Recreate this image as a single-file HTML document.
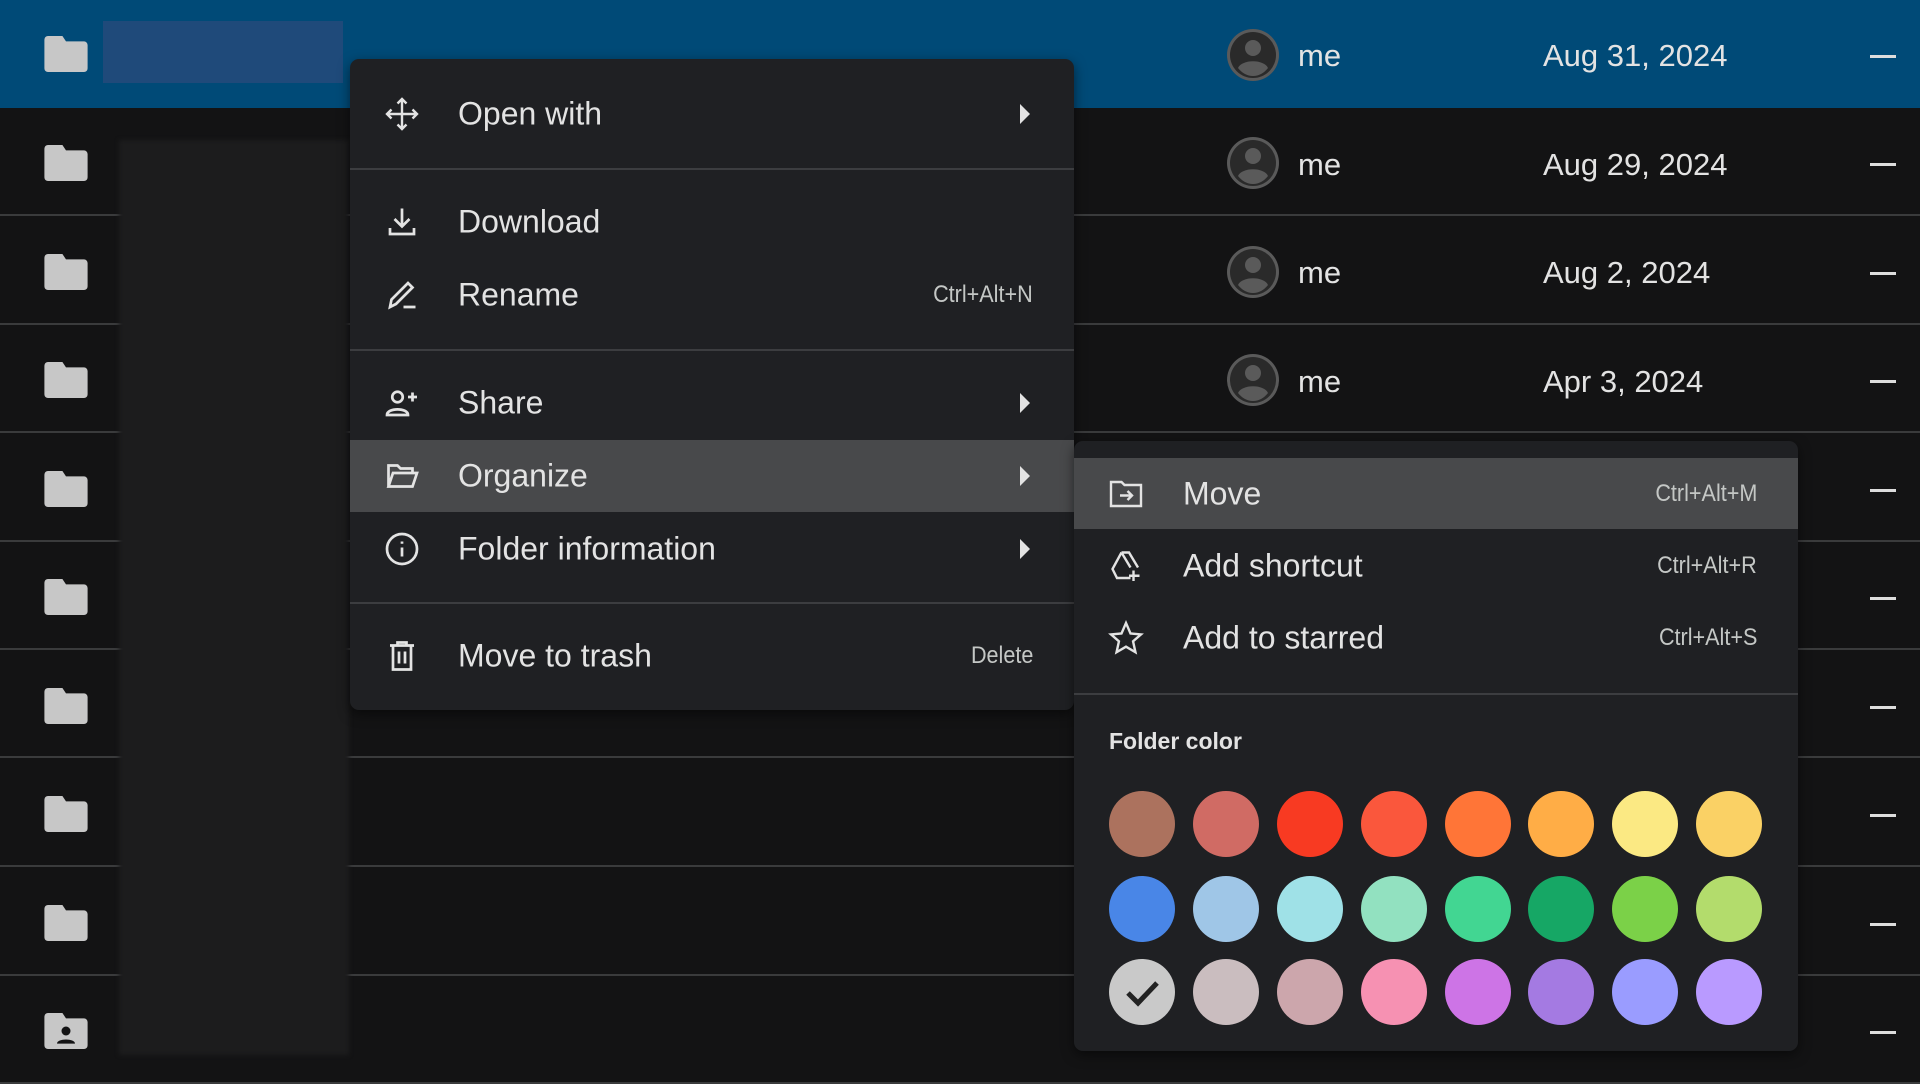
<!DOCTYPE html>
<html><head><meta charset="utf-8"><style>
*{margin:0;padding:0;box-sizing:border-box}
body{width:1920px;height:1068px;background:#131314;position:relative;overflow:hidden;font-family:"Liberation Sans",sans-serif;color:#e3e3e3}
.row{position:absolute;left:0;width:1920px;height:108px;border-bottom:2px solid #3a3b3c}
.sel{background:#004a77;border-bottom:none}
.fold{position:absolute;left:43px;width:46px;height:36px}
.blur{position:absolute;left:119px;width:230px;height:108px;background:#1c1c1d;filter:blur(2px)}
.av{position:absolute;left:1226px;width:54px;height:54px}
.me{position:absolute;left:1298px;font-size:31px}
.dt{position:absolute;left:1543px;font-size:31px}
.dash{position:absolute;left:1870px;width:26px;height:3px;background:#ddd}
.menu{position:absolute;background:#1f2023;border-radius:9px;box-shadow:0 4px 12px rgba(0,0,0,.5)}
.it{position:absolute;left:0;right:0;height:72px}
.it .t{position:absolute;top:50%;transform:translateY(-50%);font-size:32px;color:#e3e3e3}
.it .sc{position:absolute;top:50%;transform:translateY(-50%) scaleX(.9);transform-origin:right center;font-size:24px;color:#c4c7c5}
.it .ar{position:absolute;top:50%;margin-top:-10px;width:0;height:0;border-left:10px solid #e3e3e3;border-top:10px solid transparent;border-bottom:10px solid transparent}
.it svg{position:absolute;top:50%;margin-top:-18px}
.hl{background:#48494b}
.dv{position:absolute;left:0;right:0;height:2px;background:#3c3d40}
.c{position:absolute;width:66px;height:66px;border-radius:50%}
</style></head><body>
<svg width="0" height="0" style="position:absolute"><defs><symbol id="f" viewBox="0 0 24 20"><path d="M2 0h8l2 3h10a2 2 0 0 1 2 2v13a2 2 0 0 1-2 2H2a2 2 0 0 1-2-2V2a2 2 0 0 1 2-2z" fill="#c7c7c7"/></symbol>
<symbol id="a" viewBox="0 0 54 54"><circle cx="27" cy="27" r="26" fill="#5a5a5a"/><circle cx="27" cy="27" r="23" fill="#2a2a2a"/><circle cx="27" cy="20" r="8" fill="#5a5a5a"/><path d="M12 40c4-9 26-9 30 0c-4 5-9 8-15 8s-11-3-15-8z" fill="#5a5a5a"/></symbol></defs></svg>
<div class="row sel" style="top:0"></div>
<div style="position:absolute;left:103px;top:21px;width:240px;height:62px;background:#1f4a7a"></div>
<div class="row" style="top:108px"></div><div class="row" style="top:217px"></div><div class="row" style="top:325px"></div><div class="row" style="top:434px"></div><div class="row" style="top:542px"></div><div class="row" style="top:650px"></div><div class="row" style="top:759px"></div><div class="row" style="top:868px"></div><div class="row" style="top:976px"></div>
<div class="blur" style="top:140px;height:915px"></div>
<svg class="fold" style="top:36px" ><use href="#f"/></svg>
<svg class="fold" style="top:145px"><use href="#f"/></svg>
<svg class="fold" style="top:254px"><use href="#f"/></svg>
<svg class="fold" style="top:362px"><use href="#f"/></svg>
<svg class="fold" style="top:471px"><use href="#f"/></svg>
<svg class="fold" style="top:579px"><use href="#f"/></svg>
<svg class="fold" style="top:688px"><use href="#f"/></svg>
<svg class="fold" style="top:796px"><use href="#f"/></svg>
<svg class="fold" style="top:905px"><use href="#f"/></svg>
<svg class="fold" style="top:1013px" viewBox="0 0 24 20"><path d="M2 0h8l2 3h10a2 2 0 0 1 2 2v13a2 2 0 0 1-2 2H2a2 2 0 0 1-2-2V2a2 2 0 0 1 2-2z" fill="#c7c7c7"/><circle cx="12" cy="10" r="2.5" fill="#131314"/><path d="M7 17c0-3 10-3 10 0z" fill="#131314"/></svg>
<svg class="av" style="top:28px"><use href="#a"/></svg><div class="me" style="top:38px">me</div><div class="dt" style="top:38px">Aug 31, 2024</div>
<svg class="av" style="top:136px"><use href="#a"/></svg><div class="me" style="top:147px">me</div><div class="dt" style="top:147px">Aug 29, 2024</div>
<svg class="av" style="top:245px"><use href="#a"/></svg><div class="me" style="top:255px">me</div><div class="dt" style="top:255px">Aug 2, 2024</div>
<svg class="av" style="top:353px"><use href="#a"/></svg><div class="me" style="top:364px">me</div><div class="dt" style="top:364px">Apr 3, 2024</div>
<div class="dash" style="top:55px"></div><div class="dash" style="top:163px"></div><div class="dash" style="top:272px"></div><div class="dash" style="top:380px"></div><div class="dash" style="top:489px"></div><div class="dash" style="top:597px"></div><div class="dash" style="top:706px"></div><div class="dash" style="top:814px"></div><div class="dash" style="top:923px"></div><div class="dash" style="top:1031px"></div>

<div class="menu" style="left:350px;top:59px;width:724px;height:651px">
 <div class="it" style="top:19px"><svg style="left:34px" width="36" height="36" viewBox="0 0 24 24" fill="none" stroke="#e3e3e3" stroke-width="1.6"><path d="M12 2v20M2 12h20M9 5l3-3 3 3M9 19l3 3 3-3M5 9l-3 3 3 3M19 9l3 3-3 3"/></svg><span class="t" style="left:108px">Open with</span><span class="ar" style="left:670px"></span></div>
 <div class="dv" style="top:109px"></div>
 <div class="it" style="top:127px"><svg style="left:34px" width="36" height="36" viewBox="0 0 24 24" fill="none" stroke="#e3e3e3" stroke-width="1.8"><path d="M12 3v12M7 10l5 5 5-5M4 16v4h16v-4"/></svg><span class="t" style="left:108px">Download</span></div>
 <div class="it" style="top:200px"><svg style="left:34px" width="36" height="36" viewBox="0 0 24 24" fill="none" stroke="#e3e3e3" stroke-width="1.8"><path d="M4 20l1-5L16 4l3 3L8 18zM13 20h8"/></svg><span class="t" style="left:108px">Rename</span><span class="sc" style="right:41px">Ctrl+Alt+N</span></div>
 <div class="dv" style="top:290px"></div>
 <div class="it" style="top:308px"><svg style="left:34px" width="36" height="36" viewBox="0 0 24 24" fill="none" stroke="#e3e3e3" stroke-width="1.8"><circle cx="9" cy="8" r="3.5"/><path d="M2 20c0-5 14-5 14 0zM19 5v6M16 8h6"/></svg><span class="t" style="left:108px">Share</span><span class="ar" style="left:670px"></span></div>
 <div class="it hl" style="top:381px"><svg style="left:34px" width="36" height="36" viewBox="0 0 24 24" fill="none" stroke="#e3e3e3" stroke-width="1.8"><path d="M3 19V5h6l2 2h8v3M3 19l3-9h16l-3 9z"/></svg><span class="t" style="left:108px">Organize</span><span class="ar" style="left:670px"></span></div>
 <div class="it" style="top:454px"><svg style="left:34px" width="36" height="36" viewBox="0 0 24 24" fill="none" stroke="#e3e3e3" stroke-width="1.8"><circle cx="12" cy="12" r="10"/><path d="M12 11v6M12 7v1.5"/></svg><span class="t" style="left:108px">Folder information</span><span class="ar" style="left:670px"></span></div>
 <div class="dv" style="top:543px"></div>
 <div class="it" style="top:561px"><svg style="left:34px" width="36" height="36" viewBox="0 0 24 24" fill="none" stroke="#e3e3e3" stroke-width="1.8"><path d="M4 5h16M9 5V3h6v2M6 5v16h12V5M10 9v8M14 9v8"/></svg><span class="t" style="left:108px">Move to trash</span><span class="sc" style="right:41px">Delete</span></div>
</div>

<div class="menu" style="left:1074px;top:441px;width:724px;height:610px">
 <div class="it hl" style="top:17px;height:71px"><svg style="left:32px" width="40" height="36" viewBox="0 0 24 24" fill="none" stroke="#e3e3e3" stroke-width="1.6"><path d="M2 20V4h7l2 2h11v14zM8 13h8M13 10l3 3-3 3"/></svg><span class="t" style="left:109px">Move</span><span class="sc" style="right:41px">Ctrl+Alt+M</span></div>
 <div class="it" style="top:89px"><svg style="left:32px" width="40" height="36" viewBox="0 0 24 24" fill="none" stroke="#e3e3e3" stroke-width="1.6"><path d="M9 3h5l6 10M9 3L3 14l3 6h9M9 3l6 10M17 15v7M14 18.5h7"/></svg><span class="t" style="left:109px">Add shortcut</span><span class="sc" style="right:41px">Ctrl+Alt+R</span></div>
 <div class="it" style="top:161px"><svg style="left:32px" width="40" height="36" viewBox="0 0 24 24" fill="none" stroke="#e3e3e3" stroke-width="1.6"><path d="M12 2l3 7 7 .6-5.3 4.6 1.6 7.3L12 17.8 5.7 21.5l1.6-7.3L2 9.6 9 9z"/></svg><span class="t" style="left:109px">Add to starred</span><span class="sc" style="right:41px">Ctrl+Alt+S</span></div>
 <div class="dv" style="top:252px"></div>
 <div style="position:absolute;left:35px;top:287px;font-size:23px;font-weight:bold;color:#e3e3e3">Folder color</div>
 <div class="c" style="left:35px;top:350px;background:#ac725e"></div><div class="c" style="left:119px;top:350px;background:#d06b64"></div><div class="c" style="left:203px;top:350px;background:#f83a22"></div><div class="c" style="left:287px;top:350px;background:#fa573c"></div><div class="c" style="left:371px;top:350px;background:#ff7537"></div><div class="c" style="left:454px;top:350px;background:#ffad46"></div><div class="c" style="left:538px;top:350px;background:#fbe983"></div><div class="c" style="left:622px;top:350px;background:#fad165"></div>
 <div class="c" style="left:35px;top:435px;background:#4986e7"></div><div class="c" style="left:119px;top:435px;background:#9fc6e7"></div><div class="c" style="left:203px;top:435px;background:#9fe1e7"></div><div class="c" style="left:287px;top:435px;background:#92e1c0"></div><div class="c" style="left:371px;top:435px;background:#42d692"></div><div class="c" style="left:454px;top:435px;background:#16a765"></div><div class="c" style="left:538px;top:435px;background:#7bd148"></div><div class="c" style="left:622px;top:435px;background:#b3dc6c"></div>
 <div class="c" style="left:35px;top:518px;background:#c9c9c9"><svg width="66" height="66" viewBox="0 0 66 66"><path d="M19 34l10 10 19-20" fill="none" stroke="#222" stroke-width="5"/></svg></div><div class="c" style="left:119px;top:518px;background:#cabdbf"></div><div class="c" style="left:203px;top:518px;background:#cca6ac"></div><div class="c" style="left:287px;top:518px;background:#f691b2"></div><div class="c" style="left:371px;top:518px;background:#cd74e6"></div><div class="c" style="left:454px;top:518px;background:#a47ae2"></div><div class="c" style="left:538px;top:518px;background:#9a9cff"></div><div class="c" style="left:622px;top:518px;background:#b99aff"></div>
</div>
</body></html>
